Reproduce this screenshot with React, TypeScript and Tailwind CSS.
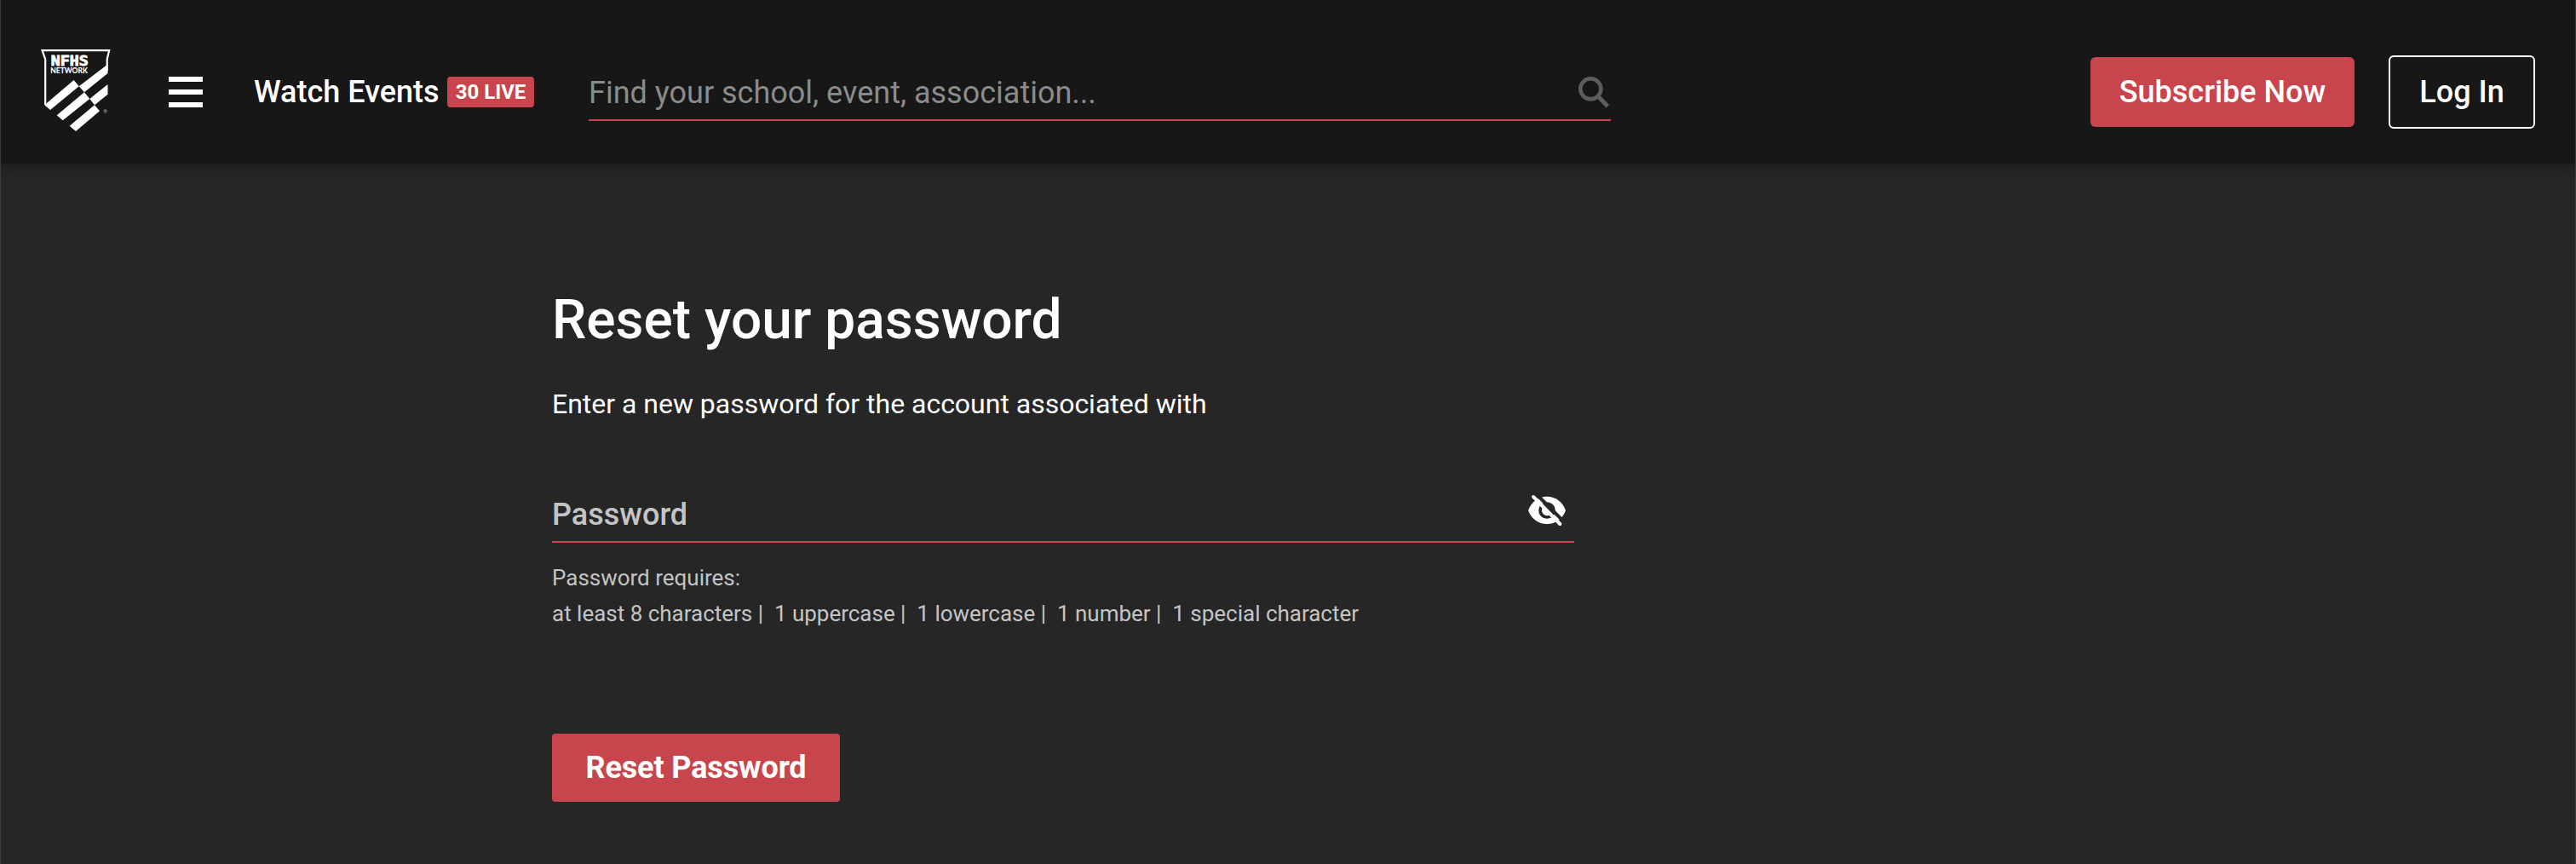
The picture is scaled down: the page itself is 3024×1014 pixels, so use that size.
import React from "react";

function Logo() {
  return (
    <svg className="h-[100px] w-[86px] shrink-0" viewBox="0 0 86 100" fill="none" aria-label="NFHS Network">
      <path d="M6.200 66V12.500L2.500 2.200H81.200L78.700 12.500V26" stroke="#fff" strokeWidth="2.200" />
      <g fill="#fff">
        <path d="M39.700 37L45.700 44.300L12 72L5.200 66.300Z" />
        <path d="M45.700 44.300L79.500 18.500V29L52 51.300Z" />
        <path d="M52 51.300L58.300 59L26.700 84.300L19.700 78.300Z" />
        <path d="M58.300 59L79.500 42V53.700L64 66.300Z" />
        <path d="M64 66.300L70 73.300L42 97L34.700 90.700Z" />
      </g>
      <text x="12.800" y="20" fill="#fff" fontFamily="'DejaVu Sans Mono', monospace" fontWeight="700" fontSize="16" textLength="44" lengthAdjust="spacingAndGlyphs" stroke="#fff" strokeWidth="0.8">NFHS</text>
      <text x="12.300" y="29.300" fill="#fff" fontFamily="Lato, sans-serif" fontWeight="900" fontSize="8.400" textLength="43.500" lengthAdjust="spacingAndGlyphs">NETWORK</text>
      <text x="74.300" y="76" fill="#bbb" fontFamily="Roboto, sans-serif" fontSize="6">®</text>
    </svg>
  );
}

function EyeOffIcon() {
  return (
    <svg className="mr-[9px] h-[38px] w-[46px]" viewBox="39 30 138 114" fill="none">
      <path d="M42 87C53 57 78 38 108 38S163 57 174 87C163 117 138 135 108 135S53 117 42 87Z" fill="#fff" />
      <circle cx="108" cy="87" r="29.500" fill="#262626" />
      <path d="M95 73A19 19 0 1 0 122 100Z" fill="#fff" />
      <path d="M74 33L168 127" stroke="#262626" strokeWidth="12" />
      <path d="M60 39L154 135" stroke="#fff" strokeWidth="12" strokeLinecap="round" />
    </svg>
  );
}

function Header() {
  return (
    <header className="flex h-[192px] items-start bg-[#171717] pl-[46px] pr-[47px] shadow-[0_4px_16px_0_rgba(0,0,0,0.35)]">
      <div className="mt-[57px]">
        <Logo />
      </div>
      <button aria-label="Menu" className="ml-[65px] mt-[90px] flex w-10 flex-col gap-[9px]">
        <span className="h-1.5 w-10 bg-white" />
        <span className="h-1.5 w-10 bg-white" />
        <span className="h-1.5 w-10 bg-white" />
      </button>
      <a className="ml-[60px] mt-[84px] w-[227px] whitespace-nowrap text-[36px] font-medium leading-[48px]">Watch Events</a>
      <span className="mt-[90px] flex h-9 w-[102px] items-center justify-center rounded-[4px] bg-[#c8454d] text-[24px] font-bold">30 LIVE</span>
      <div className="ml-16 mt-[82px] flex h-[60px] w-[1200px] justify-between border-b-2 border-[#c8454d] text-[#8b8b8b]">
        <span className="whitespace-nowrap text-[36px] leading-[54px]">Find your school, event, association...</span>
        <svg className="mr-0.5 mt-2 h-[37px] w-9" viewBox="0 0 36 37" fill="none" stroke="#5d5d5d">
          <circle cx="14.300" cy="14.300" r="12" strokeWidth="4.600" />
          <path d="M22.500 22.500L34.300 34.800" strokeWidth="5" />
        </svg>
      </div>
      <button className="ml-auto mt-[67px] h-[82px] w-[310px] rounded-[6px] bg-[#c8454d] text-[36px] font-medium">Subscribe Now</button>
      <button className="ml-10 mt-[65px] h-[86px] w-[172px] rounded-[6px] border-2 border-white text-[36px] font-medium">Log In</button>
    </header>
  );
}

function ResetForm() {
  return (
    <main className="ml-[647px] flex w-[1200px] flex-col">
      <h1 className="mt-36 text-[64px] font-medium leading-[80px]">Reset your password</h1>
      <p className="mt-[38px] text-[32px] leading-[40px] tracking-[-0.015px]">Enter a new password for the account associated with</p>
      <div className="mt-[86px] flex h-[57px] justify-between border-b-2 border-[#c8454d] text-[#c4c4c4]">
        <span className="text-[36px] font-medium leading-[48px]">Password</span>
        <EyeOffIcon />
      </div>
      <div className="mt-5 whitespace-pre text-[26px] leading-[42px] tracking-[-0.01px] text-[#c4c4c4]">
        <p>Password requires:</p>
        <p>{"at least 8 characters |  1 uppercase |  1 lowercase |  1 number |  1 special character"}</p>
      </div>
      <button className="mt-[120px] h-20 w-[338px] rounded-[4px] bg-[#c8454d] text-[36px] font-bold tracking-[-0.12px]">Reset Password</button>
    </main>
  );
}

export default function App() {
  return (
    <div className="h-[1014px] w-full overflow-hidden border-x border-[#3c3c3c] bg-[#262626] font-['Roboto',sans-serif] text-white">
      <Header />
      <ResetForm />
    </div>
  );
}
